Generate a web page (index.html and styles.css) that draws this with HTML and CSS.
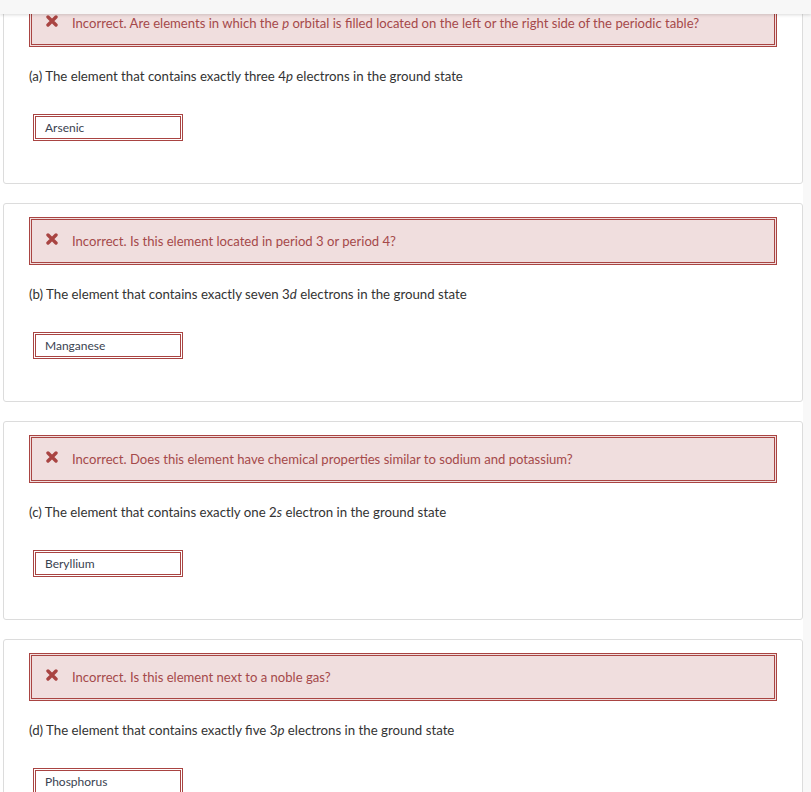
FILE: index.html
```html
<!DOCTYPE html>
<html>
<head>
    <title>Electron Configurations</title>
    <link rel="stylesheet" href="styles.css">
</head>
<body>
    <div class="top-bar"></div>

    <div class="page">
        <div class="question-list">

            <div class="question-card">
                <div class="feedback">
                    <svg class="feedback-icon" viewBox="0 0 12 12"><path d="M2 2 L10 10 M10 2 L2 10"/></svg>
                    <span>Incorrect. Are elements in which the <i>p</i> orbital is filled located on the left or the right side of the periodic table?</span>
                </div>
                <p class="question-text">(a) The element that contains exactly three 4<i>p</i> electrons in the ground state</p>
                <div class="answer-box">Arsenic</div>
            </div>

            <div class="question-card">
                <div class="feedback">
                    <svg class="feedback-icon" viewBox="0 0 12 12"><path d="M2 2 L10 10 M10 2 L2 10"/></svg>
                    <span>Incorrect. Is this element located in period 3 or period 4?</span>
                </div>
                <p class="question-text">(b) The element that contains exactly seven 3<i>d</i> electrons in the ground state</p>
                <div class="answer-box">Manganese</div>
            </div>

            <div class="question-card">
                <div class="feedback">
                    <svg class="feedback-icon" viewBox="0 0 12 12"><path d="M2 2 L10 10 M10 2 L2 10"/></svg>
                    <span>Incorrect. Does this element have chemical properties similar to sodium and potassium?</span>
                </div>
                <p class="question-text">(c) The element that contains exactly one 2<i>s</i> electron in the ground state</p>
                <div class="answer-box">Beryllium</div>
            </div>

            <div class="question-card">
                <div class="feedback">
                    <svg class="feedback-icon" viewBox="0 0 12 12"><path d="M2 2 L10 10 M10 2 L2 10"/></svg>
                    <span>Incorrect. Is this element next to a noble gas?</span>
                </div>
                <p class="question-text">(d) The element that contains exactly five 3<i>p</i> electrons in the ground state</p>
                <div class="answer-box">Phosphorus</div>
            </div>

        </div>
    </div>
</body>
</html>
```

FILE: styles.css
```css
/* GENERAL */
body {
    margin: 0;
    padding: 0;
    background-color: #f8f8f8;
    font-family: Lato, 'Open Sans', sans-serif;
    color: #333;
    overflow: hidden;
}

.top-bar {
    position: fixed;
    top: 0;
    left: 0;
    right: 0;
    height: 14px;
    background-color: #f7f7f7;
    box-shadow: 0 1px 3px rgba(0, 0, 0, 0.15);
    z-index: 10;
}

.page {
    width: 803px;
    height: 792px;
    overflow: hidden;
    background-color: #fff;
}

.question-list {
    display: flex;
    flex-direction: column;
    gap: 19px;
    padding-left: 3px;
    margin-top: -15px;
}


/* CARD */
.question-card {
    width: 800px;
    box-sizing: border-box;
    border: 1px solid #dcdcdc;
    border-radius: 3px;
    padding: 13px 25px 42px 25px;
    background-color: #fff;
}


/* FEEDBACK */
.feedback {
    display: flex;
    align-items: center;
    height: 48px;
    box-sizing: border-box;
    border: 3px double #a94442;
    background-color: #f0dede;
    color: #a5494a;
    font-size: 13.1px;
    padding: 0 0 1px 14px;
}

.feedback-icon {
    width: 12px;
    height: 12px;
    margin-right: 14px;
    flex-shrink: 0;
    margin-top: -4px;
}

.feedback-icon path {
    stroke: #a94442;
    stroke-width: 3.4;
    stroke-linecap: round;
    fill: none;
}


/* QUESTION */
.question-text {
    margin: 19px 0 0 0;
    line-height: 20px;
    font-size: 13.25px;
    color: #333;
}

.answer-box {
    margin: 28px 0 0 4px;
    width: 150px;
    height: 27px;
    box-sizing: border-box;
    border: 3px double #a94442;
    font-size: 12px;
    line-height: 21px;
    padding-left: 9px;
    color: #3a4250;
}
```
